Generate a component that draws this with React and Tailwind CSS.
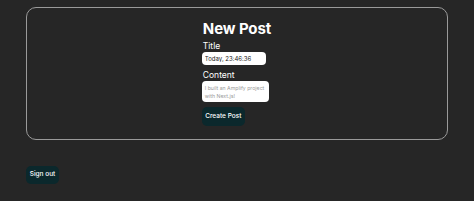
import React from "react";

export default function App() {
  return (
    <div className="min-h-screen bg-[#262626] pt-[7px] px-[26px] font-['Inter',sans-serif]">
      <div className="h-[133px] rounded-[10px] border border-[#9a9a9a] flex flex-col items-center pt-[12px]">
        <div className="flex flex-col items-start">
          <h1 className="text-[15px] font-bold leading-[18px] text-white tracking-[-0.1px]">New Post</h1>
          <label className="mt-[3px] text-[8.5px] leading-[10px] text-white">Title</label>
          <input
            readOnly
            value="Today, 23:46:36"
            className="mt-[1px] -ml-[1px] h-[13px] w-[64px] rounded-[4px] bg-white px-[3px] text-[6px] text-[#222] outline-none"
          />
          <label className="mt-[5px] text-[8.5px] leading-[10px] text-white">Content</label>
          <textarea
            placeholder={"I built an Amplify project\nwith Next.js!"}
            className="mt-[1px] -ml-[1px] h-[21px] w-[67px] resize-none overflow-hidden whitespace-pre rounded-[4px] bg-white px-[3px] pt-[3px] text-[5.2px] leading-[8px] text-[#222] placeholder:text-[#9a9a9a] outline-none"
          />
          <button className="mt-[5px] -ml-[1px] h-[19px] w-[43px] rounded-[5px] bg-[#0b282c] text-[6.5px] font-medium text-white">
            Create Post
          </button>
        </div>
      </div>
      <button className="mt-[26px] h-[18px] w-[33px] rounded-[5px] bg-[#0b282c] text-[6.5px] font-medium text-white">
        Sign out
      </button>
    </div>
  );
}
